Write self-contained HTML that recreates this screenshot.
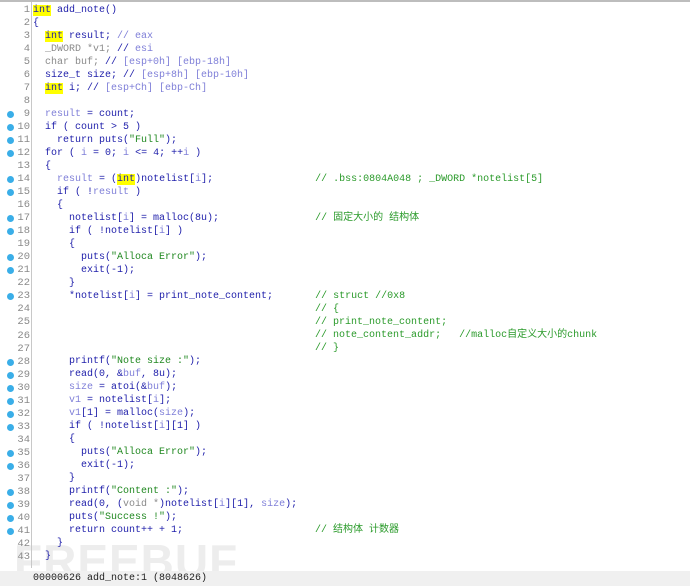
<!DOCTYPE html>
<html><head><meta charset="utf-8"><style>
body{margin:0;width:690px;height:586px;background:#fff;position:relative;overflow:hidden;font-family:"Liberation Mono","Noto Sans CJK SC",monospace;font-size:10px;}
.top{position:absolute;left:0;top:0;width:690px;height:2px;background:#bdbdbd;}
.sep{position:absolute;left:31px;top:2px;width:1px;height:566px;background:#c8c8c8;}
.ln{position:absolute;left:0;width:30px;text-align:right;color:#8a8a8a;height:13px;line-height:13px;white-space:pre;font-size:10.5px;}
.cd{position:absolute;left:33px;height:13px;line-height:13px;white-space:pre;color:#1e1eaa;}
.dot{position:absolute;left:7px;width:7px;height:7px;border-radius:50%;background:#3aaee8;}
.v{color:#7f7fd8}.s{color:#208820}.c{color:#2a9a2a}.g{color:#8a8a8a}.h{background:#ffff00}
.status{position:absolute;left:0;top:571px;width:690px;height:15px;background:#f0f0f0;}
.status span{position:absolute;left:33px;top:2px;font-size:10px;color:#222;}
.wm{position:absolute;left:14px;top:534px;font-family:"Liberation Sans",sans-serif;font-weight:bold;font-size:46px;color:#ededed;letter-spacing:1px;}
</style></head><body>
<div class="top"></div>
<div class="wm">FREEBUF</div>
<div class="sep"></div>
<div id="c"></div>
<div class="cd" style="top:4px"><span class="h">int</span> add_note()</div>
<div class="cd" style="top:17px">{</div>
<div class="cd" style="top:30px">  <span class="h">int</span> result; <span class="v">// eax</span></div>
<div class="cd" style="top:43px"><span class="g">  _DWORD *v1; </span>// <span class="v">esi</span></div>
<div class="cd" style="top:56px"><span class="g">  char buf; </span>// <span class="v">[esp+0h] [ebp-18h]</span></div>
<div class="cd" style="top:69px">  size_t size; // <span class="v">[esp+8h] [ebp-10h]</span></div>
<div class="cd" style="top:82px">  <span class="h">int</span> i; // <span class="v">[esp+Ch] [ebp-Ch]</span></div>
<div class="cd" style="top:108px">  <span class="v">result</span> = count;</div>
<div class="cd" style="top:121px">  if ( count &gt; 5 )</div>
<div class="cd" style="top:134px">    return puts(<span class="s">"Full"</span>);</div>
<div class="cd" style="top:147px">  for ( <span class="v">i</span> = 0; <span class="v">i</span> &lt;= 4; ++<span class="v">i</span> )</div>
<div class="cd" style="top:160px">  {</div>
<div class="cd" style="top:173px">    <span class="v">result</span> = (<span class="h">int</span>)notelist[<span class="v">i</span>];                 <span class="c">// .bss:0804A048 ; _DWORD *notelist[5]</span></div>
<div class="cd" style="top:186px">    if ( !<span class="v">result</span> )</div>
<div class="cd" style="top:199px">    {</div>
<div class="cd" style="top:212px">      notelist[<span class="v">i</span>] = malloc(8u);                <span class="c">// 固定大小的 结构体</span></div>
<div class="cd" style="top:225px">      if ( !notelist[<span class="v">i</span>] )</div>
<div class="cd" style="top:238px">      {</div>
<div class="cd" style="top:251px">        puts(<span class="s">"Alloca Error"</span>);</div>
<div class="cd" style="top:264px">        exit(-1);</div>
<div class="cd" style="top:277px">      }</div>
<div class="cd" style="top:290px">      *notelist[<span class="v">i</span>] = print_note_content;       <span class="c">// struct //0x8</span></div>
<div class="cd" style="top:303px"><span class="c">                                               // {</span></div>
<div class="cd" style="top:316px"><span class="c">                                               // print_note_content;</span></div>
<div class="cd" style="top:329px"><span class="c">                                               // note_content_addr;   //malloc自定义大小的chunk</span></div>
<div class="cd" style="top:342px"><span class="c">                                               // }</span></div>
<div class="cd" style="top:355px">      printf(<span class="s">"Note size :"</span>);</div>
<div class="cd" style="top:368px">      read(0, &amp;<span class="v">buf</span>, 8u);</div>
<div class="cd" style="top:381px">      <span class="v">size</span> = atoi(&amp;<span class="v">buf</span>);</div>
<div class="cd" style="top:394px">      <span class="v">v1</span> = notelist[<span class="v">i</span>];</div>
<div class="cd" style="top:407px">      <span class="v">v1</span>[1] = malloc(<span class="v">size</span>);</div>
<div class="cd" style="top:420px">      if ( !notelist[<span class="v">i</span>][1] )</div>
<div class="cd" style="top:433px">      {</div>
<div class="cd" style="top:446px">        puts(<span class="s">"Alloca Error"</span>);</div>
<div class="cd" style="top:459px">        exit(-1);</div>
<div class="cd" style="top:472px">      }</div>
<div class="cd" style="top:485px">      printf(<span class="s">"Content :"</span>);</div>
<div class="cd" style="top:498px">      read(0, (<span class="g">void *</span>)notelist[<span class="v">i</span>][1], <span class="v">size</span>);</div>
<div class="cd" style="top:511px">      puts(<span class="s">"Success !"</span>);</div>
<div class="cd" style="top:524px">      return count++ + 1;                      <span class="c">// 结构体 计数器</span></div>
<div class="cd" style="top:537px">    }</div>
<div class="cd" style="top:550px">  }</div>
<script>
var dots=[9,10,11,12,14,15,17,18,20,21,23,28,29,30,31,32,33,35,36,38,39,40,41];
var h='';
for(var i=1;i<=43;i++){var t=4+(i-1)*13.02;h+='<div class="ln" style="top:'+t+'px">'+i+'</div>';
if(dots.indexOf(i)>=0)h+='<div class="dot" style="top:'+(t+3)+'px"></div>';}
document.getElementById('c').innerHTML=h;
</script>
<div class="status"><span>00000626 add_note:1 (8048626)</span></div>
</body></html>
